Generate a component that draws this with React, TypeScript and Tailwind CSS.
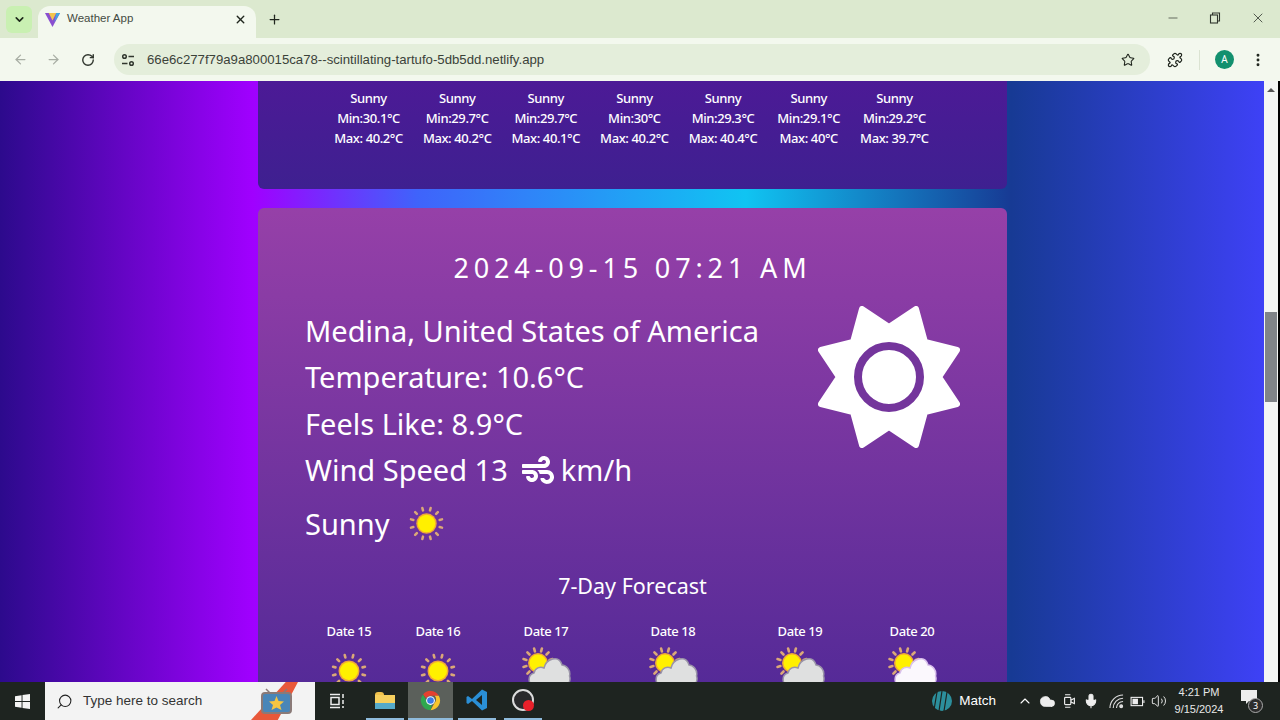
import { ArrowLeft, ArrowRight, ChevronDown, ChevronUp, Cloud, EllipsisVertical, Mic, Minus, Plus, Puzzle, RotateCw, Search, Star, Volume2, X } from "lucide-react";
import { FaWind } from "react-icons/fa";

const week = [
  { min: "Min:30.1°C", max: "Max: 40.2°C" },
  { min: "Min:29.7°C", max: "Max: 40.2°C" },
  { min: "Min:29.7°C", max: "Max: 40.1°C" },
  { min: "Min:30°C", max: "Max: 40.2°C" },
  { min: "Min:29.3°C", max: "Max: 40.4°C" },
  { min: "Min:29.1°C", max: "Max: 40°C" },
  { min: "Min:29.2°C", max: "Max: 39.7°C" },
];

function Rays({ cx, cy, r1, r2, n }: { cx: number; cy: number; r1: number; r2: number; n: number }) {
  return (
    <>
      {Array.from({ length: n }).map((_, i) => {
        const a = ((i + 0.5) / n) * Math.PI * 2;
        return (
          <line key={i} x1={cx + Math.cos(a) * r1} y1={cy + Math.sin(a) * r1} x2={cx + Math.cos(a) * r2} y2={cy + Math.sin(a) * r2} stroke="#dba878" strokeWidth="2.6" strokeLinecap="round" />
        );
      })}
    </>
  );
}

function SunSmall({ className }: { className?: string }) {
  return (
    <svg viewBox="0 0 36 36" className={className}>
      <Rays cx={18} cy={18} r1={14} r2={16.5} n={12} />
      <circle cx="18" cy="18" r="10.5" fill="#f0a838" />
      <circle cx="18" cy="18" r="9" fill="#fff000" />
    </svg>
  );
}

function PartlyCloudy({ white }: { white?: boolean }) {
  const fill = white ? "#fbf8fd" : "#dfe0e0";
  const edge = white ? "#d9c0ec" : "#9a94a8";
  return (
    <svg viewBox="0 0 50 50" className="w-[50px] h-[50px]">
      <Rays cx={17} cy={16} r1={12} r2={15} n={12} />
      <circle cx="17" cy="16" r="10" fill="#f0a838" />
      <circle cx="17" cy="16" r="8.500" fill="#fff000" />
      <path d="M13 38 C7 38 6 28 13 26 C14 21 19 19 23 21 C25 12 38 7 41 18 C45 18 50 23 48.500 29 C50 33 48 38 44 38 Z" fill={fill} stroke={edge} strokeWidth="1.500" />
    </svg>
  );
}

function BigSun() {
  return (
    <svg viewBox="-71 -71 142 142" className="w-[142px] h-[142px] shrink-0">
      <polygon
        points="-27,-68 0,-50 27,-68 36,-35 68,-27 50,0 68,27 36,35 27,68 0,50 -27,68 -36,35 -68,27 -50,0 -68,-27 -36,-35"
        fill="#fff"
        stroke="#fff"
        strokeWidth="6"
        strokeLinejoin="round"
      />
      <circle cx="0" cy="0" r="31" fill="#fff" stroke="#74359c" strokeWidth="8" />
    </svg>
  );
}

function ChromeLogo() {
  return (
    <svg viewBox="0 0 24 24" className="w-[21px] h-[21px]">
      <path d="M12 1a11 11 0 0 1 9.500 5.500H12a5.500 5.500 0 0 0-5 3L3.500 5A11 11 0 0 1 12 1z" fill="#e5402f" />
      <path d="M21.500 6.500A11 11 0 0 1 12 23l4.700-8.500a5.500 5.500 0 0 0 0-8z" fill="#f8c52c" />
      <path d="M12 23A11 11 0 0 1 3.500 5l4.600 8.500a5.500 5.500 0 0 0 5.400 3.300z" fill="#2fa84f" />
      <circle cx="12" cy="12" r="5" fill="#fff" />
      <circle cx="12" cy="12" r="3.800" fill="#3a7be8" />
    </svg>
  );
}

function Windows() {
  return (
    <svg viewBox="0 0 16 16" className="w-[15px] h-[15px]" fill="#f4f4f4">
      <path d="M0 2.300 7 1.300V7.500H0zM8 1.100 16 0V7.500H8zM0 8.500H7V14.700L0 13.700zM8 8.500H16V16L8 14.900z" />
    </svg>
  );
}

export default function App() {
  return (
    <div className="w-[1280px] h-[720px] overflow-hidden flex flex-col font-['Noto_Sans',sans-serif]">
      {/* tab strip */}
      <div className="h-[38px] bg-[#dce9cf] flex items-end shrink-0">
        <div className="w-[26px] h-[27px] ml-[6px] mb-[5px] bg-[#c9f0b2] rounded-md flex items-center justify-center">
          <ChevronDown size={13} strokeWidth={3} className="text-[#1f2a1c]" />
        </div>
        <div className="w-[218px] h-[32px] ml-[6px] pb-[6px] bg-[#f3f8ee] rounded-t-xl flex items-center pl-[6px] pr-[9px] font-['Liberation_Sans',sans-serif]">
          <svg viewBox="0 0 18 18" className="w-[17px] h-[17px]">
            <path d="M1 2h16L9 17z" fill="#8a4fd0" />
            <path d="M5 2h8L9 10z" fill="#f3c44c" />
            <path d="M13 2h4L11 12z" fill="#3fa8e0" />
          </svg>
          <span className="ml-[6px] text-[11.5px] text-[#444b42]">Weather App</span>
          <X size={13} strokeWidth={2.6} className="ml-auto text-[#20261e]" />
        </div>
        <Plus size={15} strokeWidth={2} className="ml-[11px] mb-[11px] text-[#20261e]" />
        <div className="ml-auto flex items-center gap-[29px] pr-[14px] mb-[12px] text-[#30362e]">
          <Minus size={14} strokeWidth={1.2} />
          <svg viewBox="0 0 12 12" className="w-[12px] h-[12px]" fill="none" stroke="currentColor" strokeWidth="1.100">
            <rect x="1.500" y="3" width="7" height="8" />
            <path d="M3.500 3V1H10.500V9H8.500" />
          </svg>
          <X size={16} strokeWidth={1.2} />
        </div>
      </div>

      {/* toolbar */}
      <div className="h-[43px] bg-[#f3f8ee] flex items-center shrink-0">
        <ArrowLeft size={15} strokeWidth={2} className="ml-[13px] text-[#a8aea4]" />
        <ArrowRight size={15} strokeWidth={2} className="ml-[18px] text-[#a8aea4]" />
        <RotateCw size={14} strokeWidth={2.4} className="ml-[20px] text-[#30362e]" />
        <div className="ml-[19px] w-[1036px] h-[31px] bg-[#e4eedb] rounded-full flex items-center pl-[7px] pr-[15px]">
          <svg viewBox="0 0 14 14" className="w-[14px] h-[14px]" fill="none" stroke="#30362e" strokeWidth="1.500">
            <circle cx="3.500" cy="3.500" r="1.800" />
            <path d="M7.500 3.500H13M1 10.500H6.500" />
            <circle cx="10.500" cy="10.500" r="1.800" />
          </svg>
          <span className="ml-[12px] text-[13.2px] text-[#3b4239] font-['Liberation_Sans',sans-serif]">66e6c277f79a9a800015ca78--scintillating-tartufo-5db5dd.netlify.app</span>
          <Star size={14} strokeWidth={1.8} className="ml-auto text-[#20261e]" />
        </div>
        <Puzzle size={16} strokeWidth={1.8} className="ml-[17px] text-[#20261e]" />
        <div className="ml-[16px] w-px h-[20px] bg-[#dbe3d2]" />
        <div className="ml-[15px] w-[19px] h-[19px] rounded-full bg-[#12906e] text-white text-[10px] flex items-center justify-center">A</div>
        <EllipsisVertical size={16} strokeWidth={2.4} className="ml-[16px] text-[#20261e]" />
      </div>

      {/* page */}
      <div className="h-[601px] flex overflow-hidden shrink-0">
        <div className="w-[1264px] bg-[linear-gradient(90deg,#2c0a8c_0%,#a000ff_20%,#3f63fb_33%,#10c4f2_59%,#173a94_80%,#3e41f6_100%)] pl-[258px] text-white">
          <div className="w-[749px] h-[108px] rounded-b-md bg-[linear-gradient(180deg,#4c1a96,#3e2090)] pt-[7px] pr-[2px] flex justify-center gap-5 text-[13px] tracking-[-0.4px] leading-[20px] font-medium">
            {week.map((d, i) => (
              <div key={i} className="flex flex-col items-center whitespace-nowrap">
                <span>Sunny</span>
                <span>{d.min}</span>
                <span>{d.max}</span>
              </div>
            ))}
          </div>

          <div className="mt-[19px] w-[749px] h-[520px] rounded-t-md bg-[linear-gradient(180deg,#9640a8,#4f2896)] px-[47px] pt-[40px]">
            <div className="text-center text-[27px] leading-[40px] tracking-[0.18em]">2024-09-15 07:21 AM</div>
            <div className="mt-[18px] flex justify-between items-start">
              <div className="text-[29px] leading-[46.4px] pt-[2px]">
                <div>Medina, United States of America</div>
                <div>Temperature: 10.6°C</div>
                <div>Feels Like: 8.9°C</div>
                <div className="flex items-center">
                  <span>Wind Speed 13</span>
                  <FaWind size={32} className="ml-[14px] mr-[7px]" />
                  <span>km/h</span>
                </div>
                <div className="mt-[7px] flex items-center gap-[20px]">Sunny <SunSmall className="w-[35px] h-[35px]" /></div>
              </div>
              <BigSun />
            </div>
            <div className="mt-[24px] text-center text-[21.5px] leading-[30px]">7-Day Forecast</div>
            <div className="mt-[20px] flex justify-center gap-5 text-[13px] tracking-[-0.4px] leading-[20px] font-medium">
              <div className="w-[69px] flex flex-col items-center"><span>Date 15</span><SunSmall className="mt-[12px] w-[36px] h-[36px]" /></div>
              <div className="w-[69px] flex flex-col items-center"><span>Date 16</span><SunSmall className="mt-[12px] w-[36px] h-[36px]" /></div>
              <div className="w-[107px] flex flex-col items-center"><span>Date 17</span><div className="mt-[6px]"><PartlyCloudy /></div></div>
              <div className="w-[107px] flex flex-col items-center"><span>Date 18</span><div className="mt-[6px]"><PartlyCloudy /></div></div>
              <div className="w-[107px] flex flex-col items-center"><span>Date 19</span><div className="mt-[6px]"><PartlyCloudy /></div></div>
              <div className="w-[77px] flex flex-col items-center"><span>Date 20</span><div className="mt-[6px]"><PartlyCloudy white /></div></div>
            </div>
          </div>
        </div>

        {/* scrollbar */}
        <div className="w-[16px] bg-[#f4f6f4] border-r-2 border-black flex flex-col items-center pt-[7px]">
          <div className="w-0 h-0 border-x-[4px] border-x-transparent border-b-[4px] border-b-[#555]" />
          <div className="mt-[220px] w-[12px] h-[90px] bg-[#808488]" />
        </div>
      </div>

      {/* taskbar */}
      <div className="h-[38px] bg-[#1e2420] flex items-center text-white shrink-0">
        <div className="w-[45px] flex justify-center"><Windows /></div>
        <div className="w-[270px] h-full bg-[#f3f3f3] flex items-center pl-[11px] relative overflow-hidden font-['Liberation_Sans',sans-serif]">
          <Search size={17} strokeWidth={1.5} className="-scale-x-100 text-[#222]" />
          <span className="ml-[10px] text-[13.5px] text-[#333]">Type here to search</span>
          <div className="absolute left-[206px] top-0 w-[47px] h-[38px] bg-[#e8583a] [clip-path:polygon(74%_0,100%_0,57%_100%,0_100%)]" />
          <svg viewBox="0 0 31 26" className="absolute left-[216px] top-[6px] w-[31px] h-[26px]">
            <path d="M9 5 5 1M22 5 26 1" stroke="#8a7a78" strokeWidth="1.500" />
            <rect x="1" y="5" width="29" height="20" rx="3" fill="#4a86b8" stroke="#8a7a78" strokeWidth="2" />
            <polygon points="15.500,8 17.500,13 23,13.500 19,17 20.500,22 15.500,19.500 10.500,22 12,17 8,13.500 13.500,13" fill="#f5c542" />
          </svg>
        </div>
        <div className="ml-[14px] w-[16px] flex flex-col items-center">
          <svg viewBox="0 0 16 16" className="w-[16px] h-[16px]" fill="none" stroke="#eee" strokeWidth="1.500"><path d="M1 1.500H11M1 14.500H11" /><rect x="2" y="4.500" width="8" height="7" /><path d="M14 1V15" strokeDasharray="4 2" /></svg>
        </div>
        <div className="ml-[21px] w-[38px] h-full border-b-2 border-[#8fbbdc] flex items-center justify-center">
          <div className="w-[20px] h-[17px] flex flex-col">
            <div className="w-[9px] h-[3px] bg-[#f0c14c] rounded-t-sm" />
            <div className="flex-1 bg-[#f6cf5e] flex items-end justify-center"><div className="w-full h-[6px] bg-[#55a9c9]" /></div>
          </div>
        </div>
        <div className="ml-[4px] w-[45px] h-full bg-[#5b605b] border-b-2 border-[#8fbbdc] flex items-center justify-center"><ChromeLogo /></div>
        <div className="ml-[5px] w-[38px] h-full border-b-2 border-[#8fbbdc] flex items-center justify-center">
          <svg viewBox="0 0 24 24" className="w-[24px] h-[24px]">
            <path d="M17 1.500 22 4V20L17 22.500 7 13 3 16 1.500 15V9L3 8 7 11z" fill="#2a8fd6" />
            <path d="M17 7 11 12 17 17z" fill="#1e2420" />
          </svg>
        </div>
        <div className="ml-[8px] w-[38px] h-full border-b-2 border-[#8fbbdc] flex items-center justify-center">
          <div className="w-[22px] h-[22px] rounded-full bg-[#2a2a2c] border-2 border-[#dcdcdc] relative">
            <div className="absolute -right-[2px] -bottom-[2px] w-[11px] h-[11px] rounded-full bg-[#e8202a]" />
          </div>
        </div>

        <div className="ml-auto flex items-center">
          <svg viewBox="0 0 22 22" className="w-[22px] h-[22px]">
            <circle cx="11" cy="11" r="10" fill="#2c8f9c" />
            <path d="M6 2 3 20M11 1 8 21M16 2 13 21" stroke="#1e2420" strokeWidth="1.200" fill="none" />
          </svg>
          <span className="ml-[6px] text-[13.5px] font-['Liberation_Sans',sans-serif]">Match</span>
          <ChevronUp size={16} strokeWidth={1.6} className="ml-[21px]" />
          <Cloud size={17} fill="#eee" strokeWidth={1} className="ml-[6px] text-[#eee]" />
          <svg viewBox="0 0 14 18" className="ml-[7px] w-[13px] h-[16px]" fill="none" stroke="#eee" strokeWidth="1.300"><rect x="1.500" y="5" width="7" height="8" rx="1" /><path d="M8.500 8 12.500 6V12L8.500 10M2 2H8M2 16H8" /></svg>
          <Mic size={16} fill="#eee" strokeWidth={1.6} className="ml-[7px] text-[#eee]" />
          <svg viewBox="0 0 16 16" className="ml-[10px] w-[15px] h-[15px]" fill="none" stroke="#ddd" strokeWidth="1.200"><path d="M1 15A14 14 0 0 1 15 1M4.500 15A10.500 10.500 0 0 1 15 4.500M8 15A7 7 0 0 1 15 8" /><circle cx="13" cy="13" r="1.500" fill="#ddd" /></svg>
          <svg viewBox="0 0 16 12" className="ml-[6px] w-[15px] h-[11px]" fill="none" stroke="#eee" strokeWidth="1.200"><rect x="1" y="1.500" width="12.500" height="9" /><rect x="2.500" y="3" width="6" height="6" fill="#eee" stroke="none" /><path d="M15 4.500V7.500" /></svg>
          <Volume2 size={16} strokeWidth={1.3} className="ml-[6px]" />
          <div className="ml-[1px] w-[62px] flex flex-col items-center text-[11px] leading-[17px] text-[#e8e8e8] font-['Liberation_Sans',sans-serif]">
            <span>4:21 PM</span>
            <span>9/15/2024</span>
          </div>
          <div className="ml-[11px] mr-[17px] w-[22px] h-[24px] relative">
            <svg viewBox="0 0 16 16" className="w-[16px] h-[16px]" fill="#eee"><path d="M0 1H16V12H8L5 15V12H0z" /></svg>
            <div className="absolute right-0 bottom-0 w-[15px] h-[15px] rounded-full bg-[#2c2c2c] border border-[#aaa] flex items-center justify-center text-[9px] leading-none">3</div>
          </div>
        </div>
      </div>
    </div>
  );
}
